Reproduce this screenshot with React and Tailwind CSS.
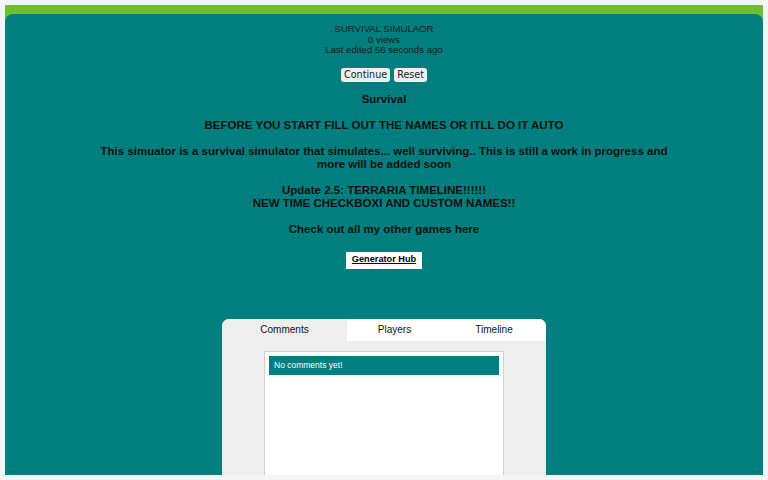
export default function App() {
  return (
    <div className="w-[768px] h-[480px] overflow-hidden bg-[#f3f5f6] pt-[5px] px-[5px]" style={{ fontFamily: '"Liberation Sans", Arial, sans-serif' }}>
      <div className="bg-[#6ebe35] pt-[9px]">
        <div className="bg-[#007f7e] rounded-t-[8px] h-[461px] overflow-hidden flex flex-col items-center text-[#111]">
          <div className="pt-[10px] flex flex-col items-center text-[9.6px] leading-[10.5px] text-[#1a1a1a]">
            <div>SURVIVAL SIMULAOR</div>
            <div>0 views</div>
            <div>Last edited 56 seconds ago</div>
          </div>
          <div className="mt-[12px] flex gap-[4px]" style={{ fontFamily: '"DejaVu Sans", Verdana, sans-serif' }}>
            <button className="h-[14px] px-[3px] text-[9.6px] leading-none bg-[#f0f0f0] rounded-[3px] text-[#222]">Continue</button>
            <button className="h-[14px] px-[3px] text-[9.6px] leading-none bg-[#f0f0f0] rounded-[3px] text-[#222]">Reset</button>
          </div>
          <div className="mt-[11px] w-[572px] text-center font-bold text-[11.5px] leading-[13px] text-[#111] flex flex-col gap-[13px]">
            <p>Survival</p>
            <p>BEFORE YOU START FILL OUT THE NAMES OR ITLL DO IT AUTO</p>
            <p>This simuator is a survival simulator that simulates... well surviving.. This is still a work in progress and more will be added soon</p>
            <p>Update 2.5: TERRARIA TIMELINE!!!!!!<br />NEW TIME CHECKBOXI AND CUSTOM NAMES!!</p>
            <p>Check out all my other games here</p>
          </div>
          <div className="mt-[16px] bg-white px-[6px] h-[17px] flex items-center">
            <span className="text-[9.2px] font-bold underline text-black">Generator Hub</span>
          </div>
          <div className="mt-[50px] w-[324px] flex-1 bg-[#eeeeee] rounded-t-[7px] overflow-hidden flex flex-col items-center">
            <div className="w-full flex h-[22px] text-[10px] text-[#111]">
              <div className="w-[125px] bg-[#eeeeee] flex items-center justify-center">Comments</div>
              <div className="w-[95px] bg-white flex items-center justify-center">Players</div>
              <div className="flex-1 bg-white flex items-center justify-center">Timeline</div>
            </div>
            <div className="mt-[10px] w-[240px] flex-1 bg-white border border-[#d0d0d0] border-b-0 pt-[4px] px-[4px]">
              <div className="bg-[#007f7e] h-[19px] flex items-center px-[5px] text-[8.5px] text-white">No comments yet!</div>
            </div>
          </div>
        </div>
      </div>
    </div>
  );
}
